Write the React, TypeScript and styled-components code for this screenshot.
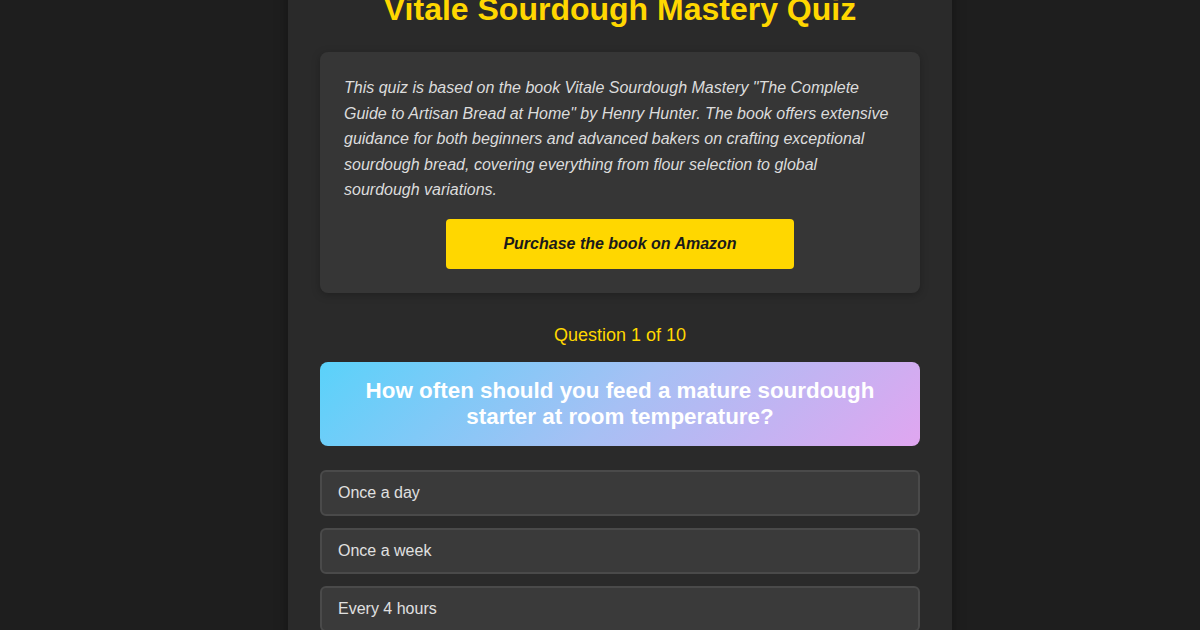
import React, { useState } from "react";
import styled, { createGlobalStyle } from "styled-components";

const GlobalStyle = createGlobalStyle`
  * { box-sizing: border-box; }
  html, body {
    margin: 0;
    padding: 0;
    background: #1e1e1e;
    font-family: "Liberation Sans", Arial, sans-serif;
    color: #e0e0e0;
    overflow: hidden;
  }
`;

const Page = styled.div`
  display: flex;
  justify-content: center;
  padding-left: 40px;
`;

const Container = styled.main`
  width: 664px;
  margin-top: -41px;
  padding: 32px;
  background: #2a2a2a;
  min-height: 720px;
  box-shadow: 0 0 12px rgba(0, 0, 0, 0.35);
`;

const Title = styled.h1`
  margin: 0 0 24px;
  font-size: 32px;
  font-weight: bold;
  color: #ffd700;
  text-align: center;
`;

const InfoCard = styled.section`
  display: flex;
  flex-direction: column;
  align-items: center;
  padding: 23px 24px 24px;
  background: #363636;
  border-radius: 8px;
  box-shadow: 0 2px 8px rgba(0, 0, 0, 0.25);
`;

const InfoText = styled.p`
  margin: 0 0 16px;
  align-self: stretch;
  font-size: 16px;
  line-height: 1.6;
  font-style: italic;
  color: #dcdcdc;
`;

const BuyButton = styled.a`
  display: inline-block;
  padding: 16px 57px;
  background: #ffd700;
  color: #1a1a1a;
  font-size: 16px;
  font-weight: bold;
  font-style: italic;
  text-decoration: none;
  border-radius: 4px;
  cursor: pointer;
`;

const Counter = styled.div`
  margin: 32px 0 16px;
  text-align: center;
  font-size: 18px;
  color: #ffd700;
`;

const QuestionCard = styled.h2`
  margin: 0 0 24px;
  padding: 16px 20px;
  border-radius: 8px;
  background: linear-gradient(135deg, #5ad2fa 0%, #a6c0f4 50%, #e0a6f0 100%);
  color: #ffffff;
  font-size: 22.4px;
  font-weight: bold;
  text-align: center;
  line-height: 26px;
`;

const Options = styled.div`
  display: flex;
  flex-direction: column;
  gap: 12px;
`;

const Option = styled.button<{ $selected: boolean }>`
  display: block;
  width: 100%;
  padding: 12px 16px;
  text-align: left;
  font-family: inherit;
  font-size: 16px;
  color: #e0e0e0;
  background: ${(p) => (p.$selected ? "#454545" : "#3a3a3a")};
  border: 2px solid ${(p) => (p.$selected ? "#ffd700" : "#4a4a4a")};
  border-radius: 6px;
  cursor: pointer;
`;

const answers = ["Once a day", "Once a week", "Every 4 hours", "Twice a day"];

export default function App() {
  const [selected, setSelected] = useState<number | null>(null);
  return (
    <>
      <GlobalStyle />
      <Page>
        <Container>
          <Title>Vitale Sourdough Mastery Quiz</Title>
          <InfoCard>
            <InfoText>
              This quiz is based on the book Vitale Sourdough Mastery "The Complete Guide to
              Artisan Bread at Home" by Henry Hunter. The book offers extensive guidance for both
              beginners and advanced bakers on crafting exceptional sourdough bread, covering
              everything from flour selection to global sourdough variations.
            </InfoText>
            <BuyButton>Purchase the book on Amazon</BuyButton>
          </InfoCard>
          <Counter>Question 1 of 10</Counter>
          <QuestionCard>
            How often should you feed a mature sourdough starter at room temperature?
          </QuestionCard>
          <Options>
            {answers.map((a, i) => (
              <Option key={a} $selected={selected === i} onClick={() => setSelected(i)}>
                {a}
              </Option>
            ))}
          </Options>
        </Container>
      </Page>
    </>
  );
}
